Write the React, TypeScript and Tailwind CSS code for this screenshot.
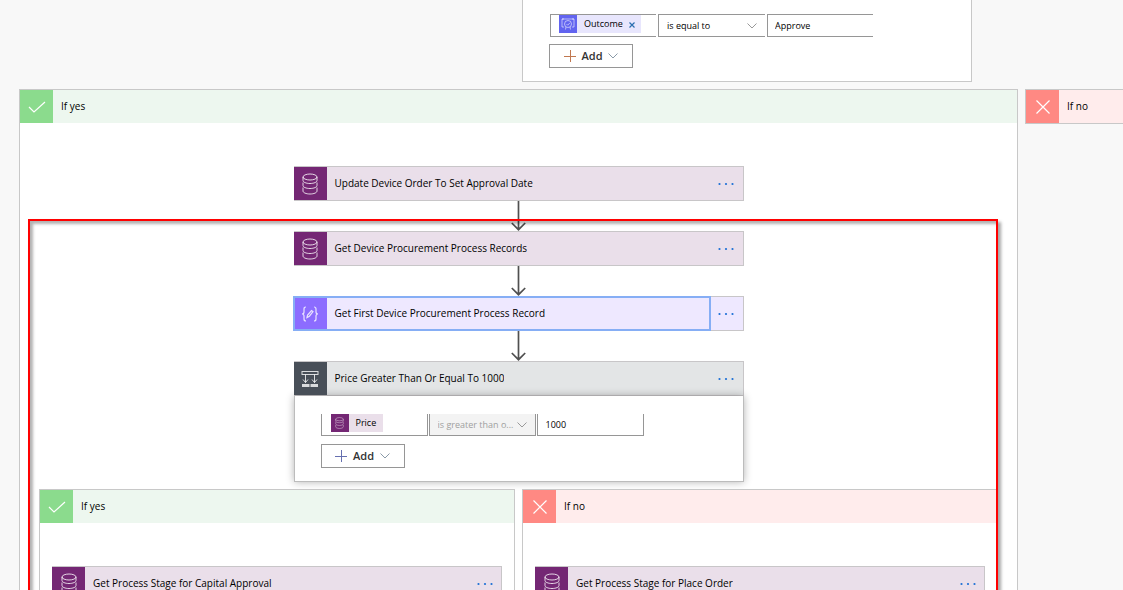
import type { ReactNode } from "react";

type Tone = "purple" | "violet" | "slate";

const tones: Record<Tone, { icon: string; row: string }> = {
  purple: { icon: "bg-[#742774]", row: "bg-[#eadfea]" },
  violet: { icon: "bg-[#8c6cff]", row: "bg-[#eee8ff]" },
  slate: { icon: "bg-[#484f58]", row: "bg-[#e3e5e6]" },
};

function DatabaseIcon({ className = "" }: { className?: string }) {
  return (
    <svg viewBox="0 0 16 22" fill="none" stroke="currentColor" className={className} aria-hidden="true">
      <ellipse cx="8" cy="4" rx="7" ry="3" />
      <path d="M1 4v3.500c0 1.700 3.100 3 7 3s7-1.300 7-3V4" />
      <path d="M1 9.500v3c0 1.700 3.100 3 7 3s7-1.300 7-3v-3" />
      <path d="M1 14.500v3.500c0 1.700 3.100 3 7 3s7-1.300 7-3v-3.500" />
    </svg>
  );
}

function ComposeIcon() {
  return (
    <svg viewBox="0 0 18 16" fill="none" stroke="currentColor" strokeWidth="1.200" className="h-4 w-[18px]" aria-hidden="true">
      <path d="M5 1C3.500 1 3 1.500 3 3v3c0 1.200-.7 2-2 2 1.300 0 2 .8 2 2v3c0 1.500.5 2 2 2" />
      <path d="M13 1c1.500 0 2 .5 2 2v3c0 1.200.7 2 2 2-1.300 0-2 .8-2 2v3c0 1.500-.5 2-2 2" />
      <path d="M6 11.500l.6-2.500L10.500 4.500l1.500 1.200-3.600 4.500z" />
    </svg>
  );
}

function BranchIcon() {
  return (
    <svg viewBox="0 0 18 18" fill="none" stroke="currentColor" className="size-[18px]" aria-hidden="true">
      <rect x="1" y="1.500" width="16" height="3" />
      <path d="M4.500 4.500v8M13.500 4.500v8M2 9.500l2.500 3 2.500-3M11 9.500l2.500 3 2.500-3" />
      <path d="M1 15.500h7.500M9.500 15.500H17" strokeWidth="3" />
    </svg>
  );
}

function ApprovalIcon() {
  return (
    <svg viewBox="0 0 14 12" fill="none" stroke="currentColor" strokeWidth="0.8" className="h-3 w-3.5" aria-hidden="true">
      <path d="M3 9H1V1h2M11 1h2v8h-2M1 1h12" />
      <circle cx="7" cy="6" r="3.500" />
      <path d="M5.500 6l1.200 1.200L9 4.800M5 9l-.5 2.500M9 9l.5 2.500" />
    </svg>
  );
}

function Chevron({ className = "" }: { className?: string }) {
  return (
    <svg viewBox="0 0 10 6" fill="none" stroke="currentColor" className={`h-1.5 w-2.5 ${className}`} aria-hidden="true">
      <path d="M.5.5L5 5 9.500.5" />
    </svg>
  );
}

function Arrow() {
  return (
    <svg viewBox="0 0 16 30" fill="none" stroke="#505050" strokeWidth="1.700" className="mx-auto block h-[30px] w-4" aria-hidden="true">
      <path d="M7.500 0v28M.8 22l6.700 6.700L14.200 22" />
    </svg>
  );
}

function StepRow({
  title,
  icon,
  tone = "purple",
  selected = false,
}: {
  title: string;
  icon: ReactNode;
  tone?: Tone;
  selected?: boolean;
}) {
  return (
    <div className={`flex h-[35px] border-y border-r border-[#c8c6c8] ${tones[tone].row}`}>
      <button
        type="button"
        className={`flex min-w-0 flex-1 items-center text-left ${
          selected ? "outline-2 -outline-offset-1 outline-[#86aef5]" : ""
        }`}
      >
        <span className={`flex h-full w-[33px] shrink-0 items-center justify-center text-white/80 ${tones[tone].icon}`}>
          {icon}
        </span>
        <span className="truncate pl-2 text-[10px]">{title}</span>
      </button>
      <button type="button" aria-label={`Menu for ${title}`} className="flex w-[33px] items-center justify-center text-[#1b6fd6]">
        <svg viewBox="0 0 16 4" fill="currentColor" className="h-1 w-4" aria-hidden="true">
          <circle cx="1.500" cy="2" r="1.100" />
          <circle cx="8" cy="2" r="1.100" />
          <circle cx="14.500" cy="2" r="1.100" />
        </svg>
      </button>
    </div>
  );
}

function Scope({ kind, children }: { kind: "yes" | "no"; children?: ReactNode }) {
  const yes = kind === "yes";
  return (
    <section className="relative h-full border border-[#c8c8c8] bg-white">
      <header className={`flex h-[33px] items-center ${yes ? "bg-[#edf7ef]" : "bg-[#ffecec]"}`}>
        <span
          className={`flex size-[33px] shrink-0 items-center justify-center text-white ${
            yes ? "bg-[#8bdb8d]" : "bg-[#ff8983]"
          }`}
        >
          {yes ? (
            <svg viewBox="0 0 18 12" fill="none" stroke="currentColor" strokeWidth="1.200" className="h-3 w-[18px]" aria-hidden="true">
              <path d="M1 6l5 5L17 1" />
            </svg>
          ) : (
            <svg viewBox="0 0 14 14" fill="none" stroke="currentColor" strokeWidth="1.200" className="size-3.5" aria-hidden="true">
              <path d="M.5.5l13 13M13.500.5l-13 13" />
            </svg>
          )}
        </span>
        <h2 className="pl-2 text-[10px]">{yes ? "If yes" : "If no"}</h2>
      </header>
      {children}
    </section>
  );
}

function Operator({ value, disabled = false, className }: { value: string; disabled?: boolean; className: string }) {
  return (
    <div className={`relative w-[107px] border-[#969696] ${className}`}>
      <select
        aria-label="Operator"
        disabled={disabled}
        className={`block size-full appearance-none pl-2 text-[9px] outline-none ${
          disabled ? "bg-[#f3f3f3] text-[#a0a0a0] opacity-100" : "bg-white"
        }`}
      >
        <option>{value}</option>
      </select>
      <Chevron className="pointer-events-none absolute top-2 right-2 text-[#999]" />
    </div>
  );
}

function AddButton({ accent }: { accent: string }) {
  return (
    <button
      type="button"
      className="flex h-6 w-[84px] items-center justify-center gap-1.5 border border-[#969696] bg-white text-[11px] font-semibold text-[#333]"
    >
      <svg viewBox="0 0 12 12" fill="none" stroke="currentColor" className={`size-3 ${accent}`} aria-hidden="true">
        <path d="M6.500 0v12M0 6.500h12" />
      </svg>
      Add
      <Chevron className="text-[#8a9aa8]" />
    </button>
  );
}

export default function App() {
  return (
    <main className="flex h-screen flex-col overflow-hidden bg-[#f8f8f8] font-['Open_Sans','Noto_Sans',sans-serif] text-black">
      <div className="flex justify-end pr-[151px]">
        <div className="w-[450px] border-x border-b border-[#c8c8c8] bg-white px-[26px] pt-3.5 pb-[13px]">
          <div className="flex h-[23px] gap-0.5 pl-px">
            <div className="flex w-[106px] border-y border-l border-[#969696] pl-2">
              <span className="flex h-[18px] bg-[#e8e6fd] text-[9px]">
                <span className="flex w-[18px] items-center justify-center bg-[#6264f0] text-white/70">
                  <ApprovalIcon />
                </span>
                <span className="flex items-center pl-[7px]">Outcome</span>
                <button type="button" aria-label="Remove Outcome" className="flex w-[18px] items-center justify-center pt-0.5 text-[#2a6fb0]">
                  <svg viewBox="0 0 6 6" fill="none" stroke="currentColor" strokeWidth="1.200" className="size-1.5" aria-hidden="true">
                    <path d="M.5.5l5 5M5.500.5l-5 5" />
                  </svg>
                </button>
              </span>
            </div>
            <Operator value="is equal to" className="w-[106px] border-y border-l" />
            <input
              aria-label="Outcome value"
              defaultValue="Approve"
              className="w-[106px] border-y border-l border-[#969696] pl-[7px] text-[9px] outline-none"
            />
          </div>
          <div className="pt-[7px]">
            <AddButton accent="text-[#c07850]" />
          </div>
        </div>
      </div>

      <div className="-mb-4 flex min-h-0 flex-1 items-start gap-[7px] pt-[7px] pl-[19px]">
        <div className="h-full min-w-0 flex-1">
          <Scope kind="yes">
            <div className="mx-auto max-w-[450px] pt-[43px]">
              <StepRow title="Update Device Order To Set Approval Date" icon={<DatabaseIcon className="h-[22px] w-4" />} />
              <Arrow />
              <StepRow title="Get Device Procurement Process Records" icon={<DatabaseIcon className="h-[22px] w-4" />} />
              <Arrow />
              <StepRow title="Get First Device Procurement Process Record" icon={<ComposeIcon />} tone="violet" selected />
              <Arrow />
              <StepRow title="Price Greater Than Or Equal To 1000" icon={<BranchIcon />} tone="slate" />
              <div className="border-x border-b border-[#bcbcbc] bg-white px-[26px] pt-[18px] pb-[13px] shadow-[0_0_8px_rgba(0,0,0,0.3)]">
                <div className="flex h-[22px] gap-px">
                  <div className="flex w-[107px] border-x border-b border-[#969696] pl-[9px]">
                    <span className="flex h-[18px] bg-[#eadfea] text-[9px]">
                      <span className="flex w-[18px] items-center justify-center bg-[#742774] text-white/70">
                        <DatabaseIcon className="h-3 w-[9px]" />
                      </span>
                      <span className="flex items-center px-[7px]">Price</span>
                    </span>
                  </div>
                  <Operator value="is greater than o..." disabled className="border-x border-b" />
                  <input
                    aria-label="Price value"
                    defaultValue="1000"
                    className="w-[107px] border-x border-b border-[#969696] pl-2 text-[9px] outline-none"
                  />
                </div>
                <div className="pt-2">
                  <AddButton accent="text-[#6670b0]" />
                </div>
              </div>
            </div>

            <div className="grid h-[140px] grid-cols-2 gap-[7px] px-[19px] pt-[7px]">
              <Scope kind="yes">
                <div className="mx-3 pt-[43px]">
                  <StepRow title="Get Process Stage for Capital Approval" icon={<DatabaseIcon className="h-[22px] w-4" />} />
                </div>
              </Scope>
              <Scope kind="no">
                <div className="mx-3 pt-[43px]">
                  <StepRow title="Get Process Stage for Place Order" icon={<DatabaseIcon className="h-[22px] w-4" />} />
                </div>
              </Scope>
            </div>

            {/* highlight frame, runs off the bottom of the canvas */}
            <div className="pointer-events-none absolute top-[129px] right-[19px] -bottom-4 left-2 border-2 border-[#f00] shadow-[3px_3px_3px_rgba(0,0,0,0.35),inset_3px_3px_3px_rgba(0,0,0,0.3)]" />
          </Scope>
        </div>
        {/* the second branch continues past the right edge */}
        <div className="-mr-5 w-[118px] shrink-0">
          <Scope kind="no" />
        </div>
      </div>
    </main>
  );
}
